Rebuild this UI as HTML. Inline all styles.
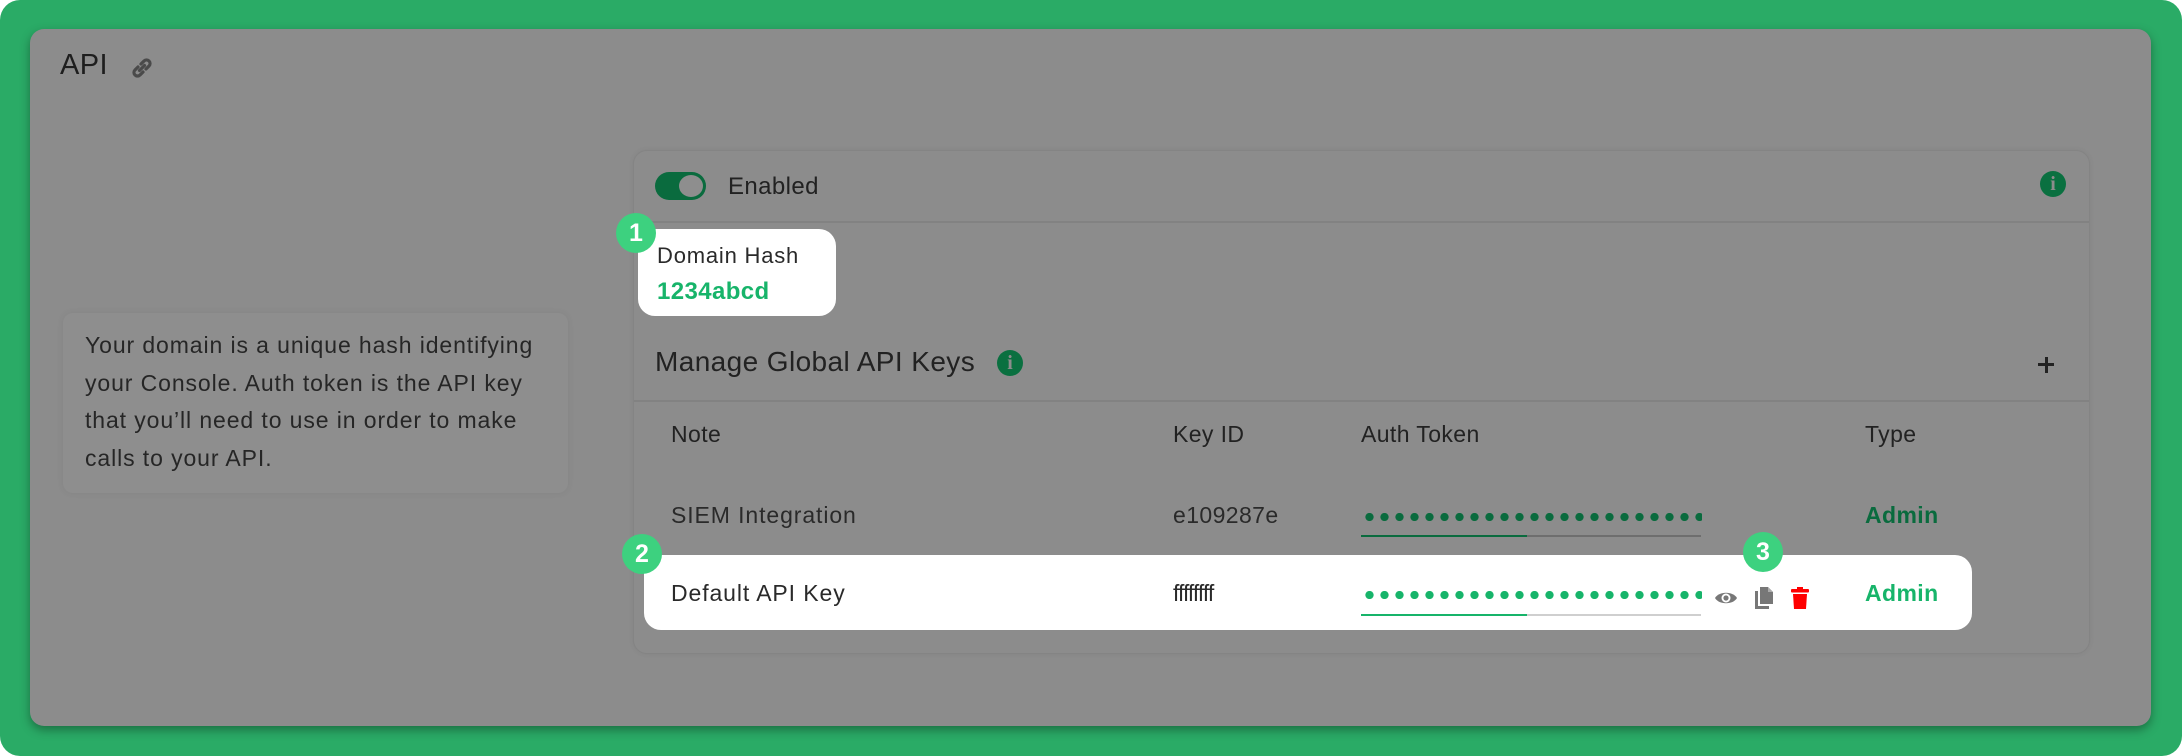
<!DOCTYPE html>
<html><head><meta charset="utf-8"><style>
*{margin:0;padding:0;box-sizing:border-box}
body{width:2182px;height:756px;background:#fff;font-family:"Liberation Sans",sans-serif;position:relative;overflow:hidden;color:#222}
#bg{position:absolute;left:0;top:0;width:2182px;height:756px;background:#2aab66;border-radius:20px}
.a{position:absolute;white-space:nowrap;line-height:1;letter-spacing:.4px}
#card{position:absolute;left:30px;top:29px;width:2121px;height:697px;background:#8c8c8c;border-radius:14px;box-shadow:0 4px 10px rgba(0,0,0,.35)}
#info{position:absolute;left:63px;top:313px;width:505px;height:180px;background:#8e8e8e;border-radius:10px;box-shadow:0 0 8px rgba(0,0,0,.06)}
#panel{position:absolute;left:633px;top:150px;width:1457px;height:504px;border:1px solid #848484;border-radius:14px;background:#8c8c8c;box-shadow:0 0 6px rgba(0,0,0,.06)}
.hl{position:absolute;height:2px;background:#828282}
.wbox{position:absolute;background:#fff;border-radius:17px}
.badge{position:absolute;width:40px;height:40px;border-radius:50%;background:#3dd17f;color:#fff;font-weight:bold;font-size:25px;line-height:40px;text-align:center}
.ic{position:absolute;width:26px;height:26px;border-radius:50%;background:#0a7040;color:#8c8c8c;font-family:"Liberation Serif",serif;font-weight:bold;font-size:20px;line-height:26px;text-align:center}
.dots{position:absolute;height:8px;width:340px;background:radial-gradient(circle,var(--c) 3.8px,transparent 4.4px) 0 0/15px 8px repeat-x}
.ul{position:absolute;height:2px}
</style></head><body>
<div id="bg"></div>
<div id="card"></div>
<div class="a" style="left:60px;top:51px;font-size:29px;color:#1e1e1e">API</div>
<svg style="position:absolute;left:130px;top:57px" width="24" height="22" viewBox="0 0 24 22"><g fill="none" stroke="#4a4a4a" stroke-width="3.2" stroke-linecap="round"><path d="M11 7 L14 4 A3.5 3.5 0 0 1 19 9 L16 12"/><path d="M13 15 L10 18 A3.5 3.5 0 0 1 5 13 L8 10"/><path d="M9.5 13.5 L14.5 8.5"/></g></svg>

<div id="info"></div>
<div style="position:absolute;left:85px;top:327px;font-size:23px;letter-spacing:.9px;line-height:37.6px;color:#262626;width:480px;white-space:nowrap">Your domain is a unique hash identifying<br>your Console. Auth token is the API key<br>that you’ll need to use in order to make<br>calls to your API.</div>

<div id="panel"></div>
<div style="position:absolute;left:655px;top:172px;width:51px;height:28px;border-radius:14px;background:#0a6b3e"></div>
<div style="position:absolute;left:679px;top:175px;width:24px;height:22px;border-radius:50%;background:#8e8e8e"></div>
<div class="a" style="left:728px;top:175px;font-size:24px;color:#222">Enabled</div>
<div class="ic" style="left:2040px;top:171px">i</div>
<div class="hl" style="left:634px;top:221px;width:1455px"></div>

<div class="wbox" style="left:638px;top:229px;width:198px;height:87px"></div>
<div class="a" style="left:657px;top:245px;font-size:22px;color:#2a2a2a;letter-spacing:.8px">Domain Hash</div>
<div class="a" style="left:657px;top:280px;font-size:24px;font-weight:bold;color:#17b46a">1234abcd</div>
<div class="badge" style="left:616px;top:213px">1</div>

<div class="a" style="left:655px;top:348px;font-size:28px;color:#222">Manage Global API Keys</div>
<div class="ic" style="left:997px;top:350px">i</div>
<div style="position:absolute;left:2038px;top:363px;width:16px;height:3px;background:#222"></div>
<div style="position:absolute;left:2044.5px;top:357px;width:3px;height:16px;background:#222"></div>
<div class="hl" style="left:634px;top:400px;width:1455px"></div>

<div class="a" style="left:671px;top:423px;font-size:23px">Note</div>
<div class="a" style="left:1173px;top:423px;font-size:23px">Key ID</div>
<div class="a" style="left:1361px;top:423px;font-size:23px">Auth Token</div>
<div class="a" style="left:1865px;top:423px;font-size:23px">Type</div>

<div class="a" style="left:671px;top:504px;font-size:23px;color:#2a2a2a;letter-spacing:.9px">SIEM Integration</div>
<div class="a" style="left:1173px;top:504px;font-size:23px;color:#2a2a2a">e109287e</div>
<div class="dots" style="left:1362px;top:513px;--c:#0a6b3e"></div>
<div class="ul" style="left:1361px;top:535px;width:166px;background:#0a6b3e"></div>
<div class="ul" style="left:1527px;top:535px;width:174px;background:#6e6e6e"></div>
<div class="a" style="left:1865px;top:504px;font-size:23px;font-weight:bold;color:#0a6b3e">Admin</div>

<div class="wbox" style="left:644px;top:555px;width:1328px;height:75px"></div>
<div class="badge" style="left:622px;top:534px">2</div>
<div class="badge" style="left:1743px;top:532px">3</div>
<div class="a" style="left:671px;top:582px;font-size:23px;color:#2a2a2a;letter-spacing:.9px">Default API Key</div>
<div class="a" style="left:1173px;top:582px;font-size:23px;color:#2a2a2a;letter-spacing:-1px">ffffffff</div>
<div class="dots" style="left:1362px;top:591px;--c:#17b46a"></div>
<div class="ul" style="left:1361px;top:614px;width:166px;background:#17b46a"></div>
<div class="ul" style="left:1527px;top:614px;width:174px;background:#cfcfcf"></div>
<svg style="position:absolute;left:1714px;top:589px" width="24" height="18" viewBox="0 0 24 18"><path d="M1 9 C5 2 19 2 23 9 C19 16 5 16 1 9Z" fill="#777"/><circle cx="12" cy="9" r="4.5" fill="#fff"/><circle cx="12" cy="9" r="2.6" fill="#777"/></svg>
<svg style="position:absolute;left:1754px;top:587px" width="20" height="22" viewBox="0 0 20 22"><path d="M6 0 H14 L19 5 V17 H6Z" fill="#777"/><path d="M14 0 V5 H19" fill="#aaa"/><path d="M1 4 H4 V19 H15 V22 H1Z" fill="#777"/></svg>
<svg style="position:absolute;left:1790px;top:587px" width="20" height="22" viewBox="0 0 20 22"><rect x="7" y="0" width="6" height="3" fill="#f00"/><rect x="1" y="2" width="18" height="3.5" rx="1" fill="#f00"/><path d="M3 7 H17 L16 22 H4Z" fill="#f00"/></svg>
<div class="a" style="left:1865px;top:582px;font-size:23px;font-weight:bold;color:#17b46a">Admin</div>
</body></html>
